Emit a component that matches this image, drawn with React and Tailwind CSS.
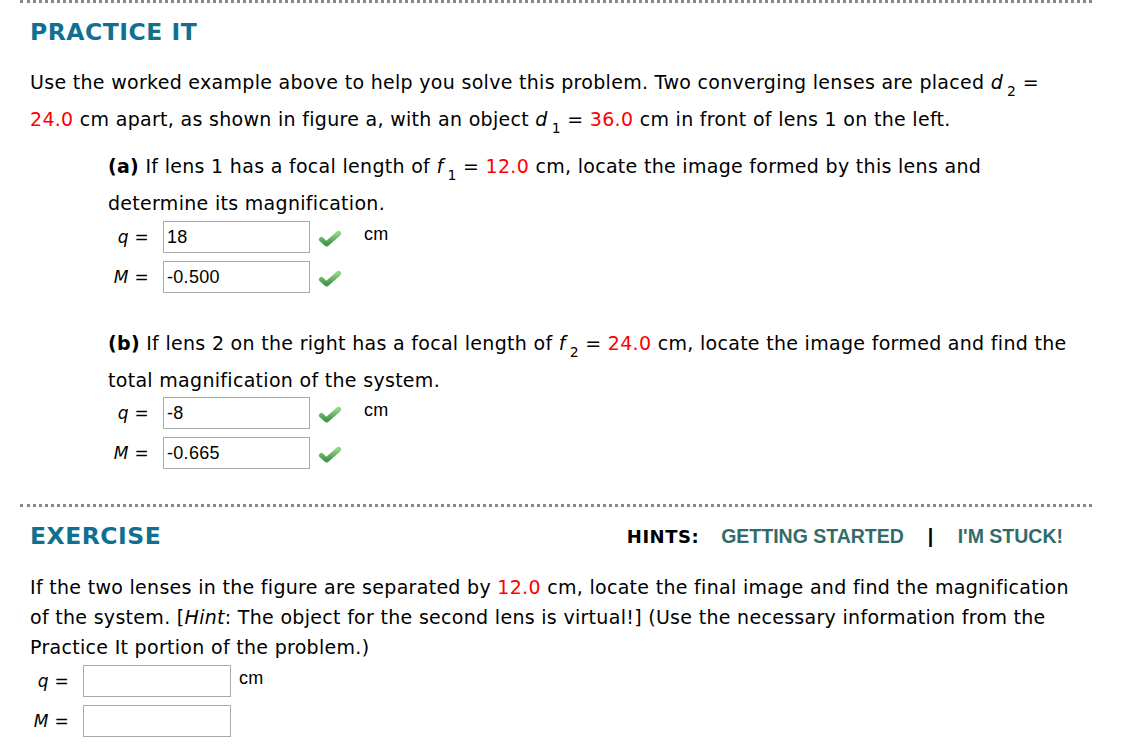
import React from 'react';

const verdana = { fontFamily: '"DejaVu Sans", Verdana, sans-serif' };
const arial = { fontFamily: '"Liberation Sans", Arial, sans-serif' };

function Check() {
  return (
    <svg width="24" height="18" viewBox="0 0 24 18" className="shrink-0">
      <defs>
        <linearGradient id="chk" x1="0" y1="0" x2="0" y2="1">
          <stop offset="0" stopColor="#8ed389" />
          <stop offset="1" stopColor="#3e9845" />
        </linearGradient>
      </defs>
      <path d="M3.5 9.5 L8.5 14 L20.5 3.5" fill="none" stroke="url(#chk)" strokeWidth="5" strokeLinecap="round" strokeLinejoin="round" />
    </svg>
  );
}

function Red({ children }) {
  return <span className="text-[#ff0000]">{children}</span>;
}

function Sub({ v, n }) {
  return (
    <span className="whitespace-nowrap">
      <i>{v}</i>
      <span className="ml-[4px] text-[14px] leading-none relative top-[7px]">{n}</span>
    </span>
  );
}

function AnswerRow({ label, value, unit, checked, labelW, boxW }) {
  return (
    <div className="flex items-center h-[40px]">
      <div className={`${labelW} flex justify-end pr-[14px] text-[17px]`}>
        <i>{label}</i>&nbsp;=
      </div>
      <div className={`${boxW} h-[32px] border border-[#a9a9a9] bg-white px-[3px] flex items-start pt-[2px] text-[18px]`} style={arial}>
        {value}
      </div>
      {checked && (
        <div className="ml-[8px] w-[24px] flex items-center mt-[4px]">
          <Check />
        </div>
      )}
      {unit && (
        <div className={`${checked ? 'ml-[22px]' : 'ml-[8px]'} text-[18px] -mt-[6px]`} style={arial}>
          {unit}
        </div>
      )}
    </div>
  );
}

export default function App() {
  return (
    <div className="w-[1123px] h-[756px] bg-white text-black overflow-hidden tracking-[0.3px]" style={verdana}>
      <div className="ml-[20px] mr-[31px] border-t-[3px] border-dotted border-[#888]" />

      <div className="pl-[30px]">
        <h2 className="mt-[12px] text-[23.5px] font-bold text-[#11708f] tracking-[0.5px]">PRACTICE IT</h2>

        <p className="mt-[14px] text-[19px] leading-[37px] whitespace-nowrap">
          Use the worked example above to help you solve this problem. Two converging lenses are placed <Sub v="d" n="2" /> =
          <br />
          <Red>24.0</Red> cm apart, as shown in figure a, with an object <Sub v="d" n="1" /> = <Red>36.0</Red> cm in front of lens 1 on the left.
        </p>

        <div className="pl-[78px] mt-[10px]">
          <p className="text-[19px] leading-[37px] whitespace-nowrap">
            <b>(a)</b> If lens 1 has a focal length of <Sub v="f" n="1" /> = <Red>12.0</Red> cm, locate the image formed by this lens and
            <br />
            determine its magnification.
          </p>
          <div className="-mt-[5px]">
            <AnswerRow label="q" value="18" unit="cm" checked labelW="w-[55px]" boxW="w-[147px]" />
            <AnswerRow label="M" value="-0.500" checked labelW="w-[55px]" boxW="w-[147px]" />
          </div>

          <p className="mt-[28px] text-[19px] leading-[37px] whitespace-nowrap">
            <b>(b)</b> If lens 2 on the right has a focal length of <Sub v="f" n="2" /> = <Red>24.0</Red> cm, locate the image formed and find the
            <br />
            total magnification of the system.
          </p>
          <div className="-mt-[6px]">
            <AnswerRow label="q" value="-8" unit="cm" checked labelW="w-[55px]" boxW="w-[147px]" />
            <AnswerRow label="M" value="-0.665" checked labelW="w-[55px]" boxW="w-[147px]" />
          </div>
        </div>
      </div>

      <div className="ml-[20px] mr-[31px] mt-[31px] border-t-[3px] border-dotted border-[#888]" />

      <div className="pl-[30px]">
        <div className="flex items-center mt-[14px] h-[30px]">
          <h2 className="text-[23.5px] font-bold text-[#11708f] tracking-[0.5px]">EXERCISE</h2>
          <div className="ml-auto mr-[60px] flex items-center">
            <span className="text-black text-[18px] font-bold tracking-[0.5px]" style={verdana}>HINTS:</span>
            <span className="ml-[22px] text-[#336b6b] text-[19.5px] font-bold tracking-normal" style={arial}>GETTING STARTED</span>
            <span className="ml-[24px] text-black text-[19.5px] font-bold" style={arial}>|</span>
            <span className="ml-[24px] text-[#336b6b] text-[19.5px] font-bold tracking-normal" style={arial}>I'M STUCK!</span>
          </div>
        </div>

        <p className="mt-[21px] text-[19px] leading-[30px] whitespace-nowrap">
          If the two lenses in the figure are separated by <Red>12.0</Red> cm, locate the final image and find the magnification
          <br />
          of the system. [<i>Hint</i>: The object for the second lens is virtual!] (Use the necessary information from the
          <br />
          Practice It portion of the problem.)
        </p>
        <div className="-mt-[1px] -ml-[30px]">
          <AnswerRow label="q" value="" unit="cm" labelW="w-[83px]" boxW="w-[148px]" />
          <AnswerRow label="M" value="" labelW="w-[83px]" boxW="w-[148px]" />
        </div>
      </div>
    </div>
  );
}
